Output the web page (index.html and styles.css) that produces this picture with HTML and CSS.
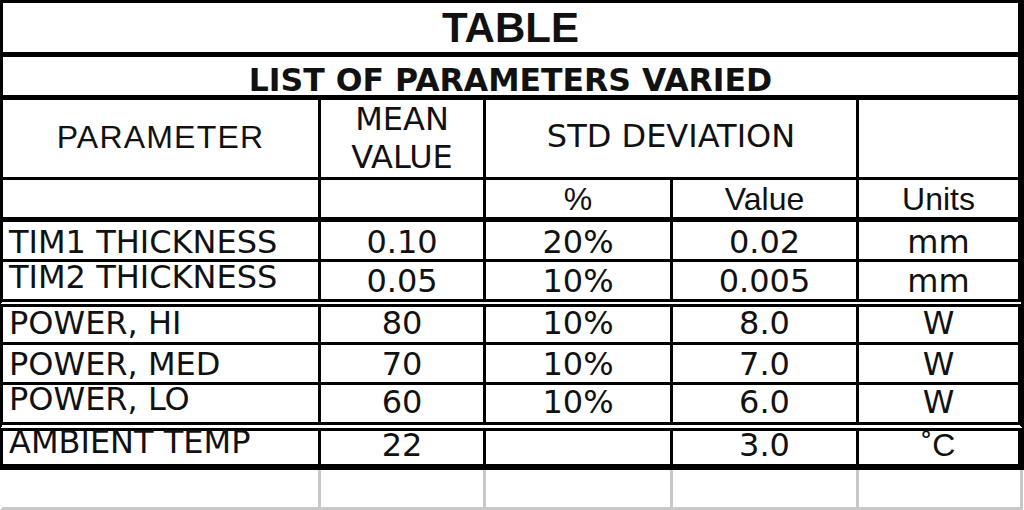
FILE: index.html
```html
<!DOCTYPE html>
<html lang="en">
<head>
<meta charset="utf-8">
<title>Table – List of parameters varied</title>
<link rel="stylesheet" href="styles.css">
</head>
<body>
<div class="sheet" role="table">
  <div class="band band-title" role="row"><div class="title" role="columnheader">TABLE</div></div>
  <div class="band band-sub" role="row"><div class="subtitle" role="columnheader">LIST OF PARAMETERS VARIED</div></div>

  <div class="row h-head1" role="row">
    <div class="cell arial wide pb3" role="columnheader">PARAMETER</div>
    <div class="cell two pb2" role="columnheader">MEAN<br>VALUE</div>
    <div class="cell span2 pb5" role="columnheader">STD DEVIATION</div>
    <div class="cell" role="columnheader"></div>
  </div>
  <div class="row h-head2 thick" role="row">
    <div class="cell"></div>
    <div class="cell"></div>
    <div class="cell arial">%</div>
    <div class="cell arial">Value</div>
    <div class="cell arial">Units</div>
  </div>

  <div class="row h-r1" role="row">
    <div class="cell name">TIM1 THICKNESS</div>
    <div class="cell">0.10</div>
    <div class="cell">20%</div>
    <div class="cell">0.02</div>
    <div class="cell">mm</div>
  </div>
  <div class="row h-r2 dbl8" role="row">
    <div class="cell name lift">TIM2 THICKNESS</div>
    <div class="cell">0.05</div>
    <div class="cell">10%</div>
    <div class="cell">0.005</div>
    <div class="cell">mm</div>
  </div>
  <div class="row h-r3" role="row">
    <div class="cell name">POWER, HI</div>
    <div class="cell">80</div>
    <div class="cell">10%</div>
    <div class="cell">8.0</div>
    <div class="cell">W</div>
  </div>
  <div class="row h-r4" role="row">
    <div class="cell name">POWER, MED</div>
    <div class="cell">70</div>
    <div class="cell">10%</div>
    <div class="cell">7.0</div>
    <div class="cell">W</div>
  </div>
  <div class="row h-r5 dbl9" role="row">
    <div class="cell name lift">POWER, LO</div>
    <div class="cell">60</div>
    <div class="cell">10%</div>
    <div class="cell">6.0</div>
    <div class="cell">W</div>
  </div>
  <div class="row h-r6 bottom" role="row">
    <div class="cell name lift">AMBIENT TEMP</div>
    <div class="cell">22</div>
    <div class="cell"></div>
    <div class="cell">3.0</div>
    <div class="cell arial">˚C</div>
  </div>

  <div class="row blank" role="row">
    <div class="cell"></div>
    <div class="cell"></div>
    <div class="cell"></div>
    <div class="cell"></div>
    <div class="cell"></div>
  </div>
</div>
</body>
</html>
```

FILE: styles.css
```css
* {
  box-sizing: border-box;
  margin: 0;
  padding: 0;
}

html,
body {
  background: #fff;
}

body {
  width: 1024px;
  height: 510px;
  overflow: hidden;
  color: #111;
  font-family: "DejaVu Sans", Verdana, sans-serif;
}

.sheet {
  display: flex;
  flex-direction: column;
  width: 1024px;
}

/* full-width bands (title + subtitle) */
.band {
  display: flex;
  align-items: center;
  justify-content: center;
  border-left: 3px solid #000;
  border-right: 6px solid #000;
  border-bottom: 5px solid #000;
}

.band-title {
  height: 57px;
  border-top: 3px solid #000;
}

.band-sub {
  height: 43px;
  padding-top: 7px;
}

.title {
  font-family: "Liberation Sans", Arial, sans-serif;
  font-weight: 700;
  font-size: 42px;
  line-height: 46px;
}

.subtitle {
  font-weight: 700;
  font-size: 31.5px;
  line-height: 36px;
  white-space: nowrap;
}

/* grid rows */
.row {
  display: grid;
  grid-template-columns: 318px 165px 187px 186px 1fr;
  grid-template-rows: minmax(0, 1fr);
  border-left: 3px solid #000;
  border-right: 6px solid #000;
  border-bottom: 3px solid #000;
}

.cell {
  display: flex;
  align-items: center;
  justify-content: center;
  min-height: 0;
  border-right: 3px solid #000;
  font-size: 32px;
  line-height: 28px;
  text-align: center;
  white-space: nowrap;
}

.cell:last-child {
  border-right: 0;
}

.two {
  line-height: 38px;
}

.span2 {
  grid-column: span 2;
}

.arial {
  font-family: "Liberation Sans", Arial, sans-serif;
}

.wide {
  letter-spacing: 1.2px;
}

.name {
  justify-content: flex-start;
  padding-left: 6px;
  text-align: left;
}

/* row heights (border-box, bottom rule included) */
.h-head1 { height: 80px; }
.h-head2 { height: 42px; }
.h-r1 { height: 40px; }
.h-r1 .cell { padding-top: 3px; }
.h-r2 { height: 45px; }
.h-r3 { height: 38px; }
.h-r3 .cell { padding-bottom: 3px; }
.h-r4 { height: 40px; }
.h-r5 { height: 46px; }
.h-r5 .cell { padding-bottom: 3px; }
.h-r6 { height: 39px; }
.h-r6 .cell { padding-bottom: 5px; }

.pb2 { padding-bottom: 2px; }
.pb3 { padding-bottom: 3px; }
.pb5 { padding-bottom: 5px; }

.h-r2 .lift { padding-bottom: 7px; }
.h-r5 .lift { padding-bottom: 9px; }
.h-r6 .lift { padding-bottom: 11px; }

/* rule variants */
.thick { border-bottom-width: 5px; }
.bottom { border-bottom-width: 6px; }
.dbl8 { border-bottom: 8px double #000; }
.dbl9 { border-bottom: 9px double #000; }

/* empty spreadsheet row below the table */
.blank {
  height: 40px;
  margin-right: 1px;
  border-left-color: transparent;
  border-right: 3px solid #c8c8c8;
  border-bottom: 3px solid #c8c8c8;
}

.blank .cell {
  border-right-color: #c8c8c8;
}
```
